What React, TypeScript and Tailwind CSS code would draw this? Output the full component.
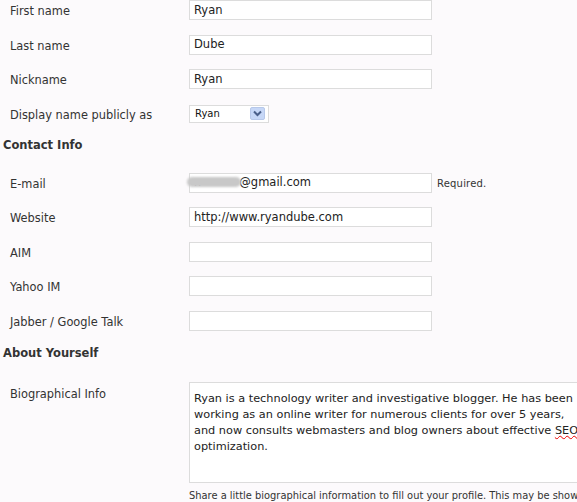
import type { FC } from 'react';

type Field = { label: string; value: string; required?: boolean; blur?: boolean };

const nameFields: Field[] = [
  { label: 'First name', value: 'Ryan' },
  { label: 'Last name', value: 'Dube' },
  { label: 'Nickname', value: 'Ryan' },
];

const contactFields: Field[] = [
  { label: 'E-mail', value: '@gmail.com', required: true, blur: true },
  { label: 'Website', value: 'http://www.ryandube.com' },
  { label: 'AIM', value: '' },
  { label: 'Yahoo IM', value: '' },
  { label: 'Jabber / Google Talk', value: '' },
];

const TextRow: FC<{ field: Field }> = ({ field }) => (
  <div className="flex h-[34.5px] items-center">
    <div className="w-[189px] shrink-0 pl-[10px] pt-[3px] text-[11.4px] text-[#333]">{field.label}</div>
    <div className="relative flex h-[20px] w-[243px] items-center border border-[#dcdcdc] bg-white pl-[4px] text-[11.5px] text-[#222]">
      {field.blur && (
        <>
          <span className="text-[#666]">r.</span>
          <span className="absolute left-[-3px] top-[3px] h-[10px] w-[54px] rounded-full bg-[#c8c8c8] blur-[1px]" />
          <span className="ml-[38px]">{field.value}</span>
        </>
      )}
      {!field.blur && field.value}
    </div>
    {field.required && (
      <span className="ml-[5px] pt-[2px] text-[10px] tracking-[0.2px] text-[#333]">Required.</span>
    )}
  </div>
);

const Heading: FC<{ title: string; shift: string }> = ({ title, shift }) => (
  <div className={`flex h-[34.5px] items-center pl-[3px] text-[11.5px] font-bold text-[#333] ${shift}`}>{title}</div>
);

const App: FC = () => {
  return (
    <div
      className="h-[502px] w-[577px] overflow-hidden bg-[#fcfafc]"
      style={{ fontFamily: '"DejaVu Sans", Verdana, sans-serif' }}
    >
      <div className="-mt-[7px]">
        {nameFields.map((f) => (
          <TextRow key={f.label} field={f} />
        ))}

        <div className="flex h-[34.5px] items-center">
          <div className="w-[189px] shrink-0 pl-[10px] pt-[3px] text-[11.4px] text-[#333]">Display name publicly as</div>
          <div className="flex h-[18px] w-[80px] items-center justify-between border border-[#dcdcdc] bg-white pl-[5px] pr-[3px] text-[10px] text-[#111]">
            <span>Ryan</span>
            <span className="flex h-[13px] w-[15px] items-center justify-center rounded-[2px] border border-[#b7c8ea] bg-[#c6d7f7]">
              <svg width="9" height="7" viewBox="0 0 9 7">
                <path d="M1 1.5 L4.5 5 L8 1.5" fill="none" stroke="#4a5f8a" strokeWidth="2" />
              </svg>
            </span>
          </div>
        </div>

        <Heading title="Contact Info" shift="pb-[5px]" />

        {contactFields.map((f) => (
          <TextRow key={f.label} field={f} />
        ))}

        <Heading title="About Yourself" shift="pb-[3px]" />

        <div className="flex pt-[9px]">
          <div className="w-[189px] shrink-0 pl-[10px] pt-[4px] text-[11.4px] text-[#333]">Biographical Info</div>
          <div className="flex flex-col">
            <div className="h-[101px] w-[400px] border border-[#dcdcdc] bg-white px-[4px] pt-[8px] text-[11.3px] leading-[16px] text-[#222]">
              Ryan is a technology writer and investigative blogger. He has been working as an online writer for numerous clients for over 5 years, and now consults webmasters and blog owners about effective{' '}
              <span className="underline decoration-wavy decoration-[#e00] decoration-[1px]">SEO</span> optimization.
            </div>
            <div className="whitespace-nowrap pt-[6px] text-[9.9px] text-[#333]">
              Share a little biographical information to fill out your profile. This may be shown publicly.
            </div>
          </div>
        </div>
      </div>
    </div>
  );
};

export default App;
